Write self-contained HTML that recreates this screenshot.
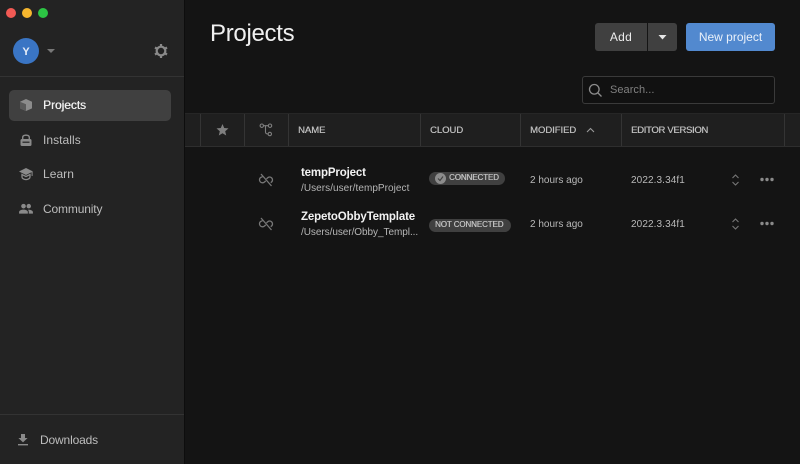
<!DOCTYPE html>
<html><head><meta charset="utf-8"><style>
html,body{margin:0;padding:0;background:#141414}
#r{position:relative;width:800px;height:464px;overflow:hidden;background:#141414;font-family:"Liberation Sans",sans-serif}
#r div,#r svg{position:absolute}
.t{white-space:nowrap;line-height:16px}
.nav{font-size:12px;color:#bdbdbd;letter-spacing:-.15px;left:43px}
.th{font-size:9.500px;color:#bcbcbc;top:123px;letter-spacing:-.05px;text-shadow:.3px 0 0 #bcbcbc}
.sep{top:114px;width:1px;height:32px;background:#343434}
.n{font-size:11.5px;font-weight:bold;color:#f2f2f2;left:301px;letter-spacing:-.15px}
.p{font-size:10px;color:#b5b5b5;left:301px;letter-spacing:.05px}
.m{font-size:10px;color:#b9b9b9;letter-spacing:0}
.b{font-size:8px;color:#c0c0c0;letter-spacing:-.1px;text-shadow:.3px 0 0 #c0c0c0}
</style></head><body><div id="r">
<div style="left:0;top:0;width:184px;height:464px;background:#232323"></div>
<div style="left:184px;top:0;width:1px;height:464px;background:#0d0d0d"></div>
<div style="left:0;top:76px;width:184px;height:1px;background:#333"></div>
<div style="left:0;top:414px;width:184px;height:1px;background:#333"></div>

<div style="left:6px;top:8px;width:10px;height:10px;border-radius:50%;background:#f25a54"></div>
<div style="left:22px;top:8px;width:10px;height:10px;border-radius:50%;background:#f6b62e"></div>
<div style="left:38px;top:8px;width:10px;height:10px;border-radius:50%;background:#2cc544"></div>

<div style="left:13px;top:38px;width:26px;height:26px;border-radius:50%;background:#3a75c4"></div>
<div class="t" style="left:13px;top:44px;width:26px;text-align:center;color:#e8eef8;font-size:11px;font-weight:bold">Y</div>
<svg style="left:46px;top:48px" width="10" height="6"><path d="M1 1H9L5 5Z" fill="#777"/></svg>
<svg style="left:153px;top:43px" width="16" height="16" viewBox="0 0 16 16"><circle cx="8" cy="8" r="4.300" fill="none" stroke="#8a8a8a" stroke-width="2.200"/><path d="M8 1V3M8 13V15M2 4.500 3.700 5.500M12.300 10.500 14 11.500M2 11.500 3.700 10.500M12.300 5.500 14 4.500" stroke="#8a8a8a" stroke-width="2.200"/></svg>

<div style="left:9px;top:90px;width:162px;height:31px;border-radius:5px;background:#404040"></div>
<svg style="left:19px;top:98px" width="14" height="14" viewBox="0 0 14 14"><path d="M7 1 13 3.800V10.400L7 13 1 10.400V3.800Z" fill="#8c8c8c"/><path d="M1 3.800 7 6.200V13L1 10.400Z" fill="#5a5a5a"/></svg>
<div class="t nav" style="top:97px;color:#f0f0f0;text-shadow:.3px 0 0 #f0f0f0;letter-spacing:-.05px">Projects</div>

<svg style="left:19px;top:133px" width="14" height="14" viewBox="0 0 14 14"><path d="M3 6V4.500C3 2.500 4.500 1.500 7 1.500S11 2.500 11 4.500V6H9.600V4.500C9.600 3.400 8.700 2.900 7 2.900S4.400 3.400 4.400 4.500V6Z" fill="#8a8a8a"/><rect x="1.500" y="6" width="11" height="7" rx="1.500" fill="#8a8a8a"/><rect x="3.500" y="8.600" width="7" height="1.200" fill="#232323"/></svg>
<div class="t nav" style="top:132px;letter-spacing:.05px">Installs</div>

<svg style="left:18px;top:167px" width="16" height="14" viewBox="0 0 16 14"><path d="M8 1 15 4.500 8 8 1 4.500Z" fill="#8a8a8a"/><path d="M4 7.500V10C4 11.500 6 12.600 8 12.600S12 11.500 12 10V7.500L8 9.500Z" fill="none" stroke="#8a8a8a" stroke-width="1.300"/><rect x="13.600" y="5" width="1" height="4" fill="#8a8a8a"/></svg>
<div class="t nav" style="top:166px;letter-spacing:.05px">Learn</div>

<svg style="left:18px;top:203px" width="16" height="12" viewBox="0 0 16 13"><circle cx="5.300" cy="3.400" r="2.500" fill="#8a8a8a"/><circle cx="11" cy="3.400" r="2.400" fill="#8a8a8a"/><path d="M.5 11.500V9.800C.5 8.200 3 7.200 5.300 7.200S10 8.200 10 9.800V11.500Z" fill="#8a8a8a"/><path d="M11 11.500V9.500C11 8.600 10.600 7.900 10 7.300 12.400 7 15.500 8 15.500 9.800V11.500Z" fill="#8a8a8a"/></svg>
<div class="t nav" style="top:201px">Community</div>

<svg style="left:17px;top:433px" width="12" height="14" viewBox="0 0 12 14"><path d="M4 1H8V5H10.600L6 9.400 1.400 5H4Z" fill="#8a8a8a"/><rect x="1" y="11" width="10" height="1.400" fill="#8a8a8a"/></svg>
<div class="t nav" style="left:40px;top:432px">Downloads</div>

<div class="t" style="left:210px;top:19px;font-size:24px;line-height:30px;color:#f0f0f0;letter-spacing:-.3px">Projects</div>

<div style="left:595px;top:23px;width:52px;height:28px;border-radius:3px 0 0 3px;background:#404040"></div>
<div style="left:648px;top:23px;width:29px;height:28px;border-radius:0 3px 3px 0;background:#404040"></div>
<div class="t" style="left:595px;top:29px;width:52px;text-align:center;font-size:12px;color:#ececec;letter-spacing:.3px">Add</div>
<svg style="left:658px;top:35px" width="9" height="5"><path d="M.5 0H8.500L4.500 4.500Z" fill="#e6e6e6"/></svg>
<div style="left:686px;top:23px;width:89px;height:28px;border-radius:3px;background:#5289cf"></div>
<div class="t" style="left:686px;top:29px;width:89px;text-align:center;font-size:12px;color:#eaf1fa;letter-spacing:0">New project</div>

<div style="left:582px;top:76px;width:191px;height:26px;border:1px solid #3a3a3a;border-radius:3px;background:#111"></div>
<svg style="left:588px;top:83px" width="15" height="15" viewBox="0 0 15 15"><circle cx="6.300" cy="6.300" r="4.800" fill="none" stroke="#8c8c8c" stroke-width="1.300"/><path d="M10 10 13.500 13.500" stroke="#8c8c8c" stroke-width="1.300"/></svg>
<div class="t" style="left:610px;top:82px;font-size:11px;color:#808080;letter-spacing:.05px">Search...</div>

<div style="left:185px;top:114px;width:615px;height:32px;background:#1f1f1f"></div>
<div style="left:185px;top:113px;width:615px;height:1px;background:#262626"></div>
<div style="left:185px;top:146px;width:615px;height:1px;background:#2e2e2e"></div>
<div class="sep" style="left:200px"></div><div class="sep" style="left:244px"></div><div class="sep" style="left:288px"></div><div class="sep" style="left:420px"></div><div class="sep" style="left:520px"></div><div class="sep" style="left:621px"></div><div class="sep" style="left:784px"></div>
<svg style="left:216px;top:124px" width="13" height="12" viewBox="0 0 13 12"><path d="M6.500 0 8.200 4 12.500 4.400 9.200 7.200 10.200 11.500 6.500 9.200 2.800 11.500 3.800 7.200 .5 4.400 4.800 4Z" fill="#7f7f7f"/></svg>
<svg style="left:259px;top:123px" width="14" height="14" viewBox="0 0 14 14" fill="none" stroke="#7f7f7f" stroke-width="1.100"><circle cx="2.800" cy="2.700" r="1.700"/><circle cx="11" cy="2.700" r="1.700"/><circle cx="10.800" cy="11" r="1.700"/><path d="M4.500 2.700H9.300M6.500 2.700V9C6.500 10.300 7.500 11 9.100 11"/></svg>
<div class="t th" style="left:298px">NAME</div>
<div class="t th" style="left:430px">CLOUD</div>
<div class="t th" style="left:530px">MODIFIED</div>
<svg style="left:586px;top:127px" width="9" height="6"><path d="M1 5 4.500 1.500 8 5" fill="none" stroke="#9a9a9a" stroke-width="1.100"/></svg>
<div class="t th" style="left:631px;letter-spacing:-.3px">EDITOR VERSION</div>

<div class="t n" style="top:165px">tempProject</div>
<div class="t p" style="top:181px">/Users/user/tempProject</div>
<div class="t n" style="top:209px">ZepetoObbyTemplate</div>
<div class="t p" style="top:225px;letter-spacing:-.05px">/Users/user/Obby_Templ...</div>

<svg style="left:258px;top:172px" width="16" height="16" viewBox="0 0 16 16" fill="none" stroke="#777" stroke-width="1.300"><path d="M4.500 4.800C2.600 5.100 1.500 6.300 1.500 7.900S2.800 10.800 4.500 10.800C5.700 10.800 6.700 10 7.700 8.800M8.500 7C9.500 5.800 10.400 5 11.500 5 13.200 5 14.500 6.300 14.500 7.900 14.500 9.300 13.800 10.200 12.700 10.700M3 2 13.500 14"/></svg>
<svg style="left:258px;top:216px" width="16" height="16" viewBox="0 0 16 16" fill="none" stroke="#777" stroke-width="1.300"><path d="M4.500 4.800C2.600 5.100 1.500 6.300 1.500 7.900S2.800 10.800 4.500 10.800C5.700 10.800 6.700 10 7.700 8.800M8.500 7C9.500 5.800 10.400 5 11.500 5 13.200 5 14.500 6.300 14.500 7.900 14.500 9.300 13.800 10.200 12.700 10.700M3 2 13.500 14"/></svg>

<div style="left:429px;top:172px;width:76px;height:13px;border-radius:7px;background:#404040"></div>
<div style="left:435px;top:173px;width:11px;height:11px;border-radius:50%;background:#8c8c8c"></div>
<svg style="left:437px;top:175px" width="7" height="7"><path d="M1 3.500 3 5.500 6 1.500" fill="none" stroke="#404040" stroke-width="1.100"/></svg>
<div class="t b" style="left:449px;top:170px">CONNECTED</div>
<div style="left:429px;top:219px;width:82px;height:13px;border-radius:7px;background:#404040"></div>
<div class="t b" style="left:435px;top:217px">NOT CONNECTED</div>

<div class="t m" style="left:530px;top:173px">2 hours ago</div>
<div class="t m" style="left:530px;top:217px">2 hours ago</div>
<div class="t m" style="left:631px;top:173px;letter-spacing:.1px">2022.3.34f1</div>
<div class="t m" style="left:631px;top:217px;letter-spacing:.1px">2022.3.34f1</div>

<svg style="left:731px;top:174px" width="9" height="12" viewBox="0 0 9 12" fill="none" stroke="#777" stroke-width="1.100"><path d="M1.500 4 4.500 1 7.500 4M1.500 8 4.500 11 7.500 8"/></svg>
<svg style="left:731px;top:218px" width="9" height="12" viewBox="0 0 9 12" fill="none" stroke="#777" stroke-width="1.100"><path d="M1.500 4 4.500 1 7.500 4M1.500 8 4.500 11 7.500 8"/></svg>
<svg style="left:760px;top:177px" width="14" height="5" fill="#8a8a8a"><circle cx="2" cy="2.500" r="1.700"/><circle cx="7" cy="2.500" r="1.700"/><circle cx="12" cy="2.500" r="1.700"/></svg>
<svg style="left:760px;top:221px" width="14" height="5" fill="#8a8a8a"><circle cx="2" cy="2.500" r="1.700"/><circle cx="7" cy="2.500" r="1.700"/><circle cx="12" cy="2.500" r="1.700"/></svg>
</div></body></html>
